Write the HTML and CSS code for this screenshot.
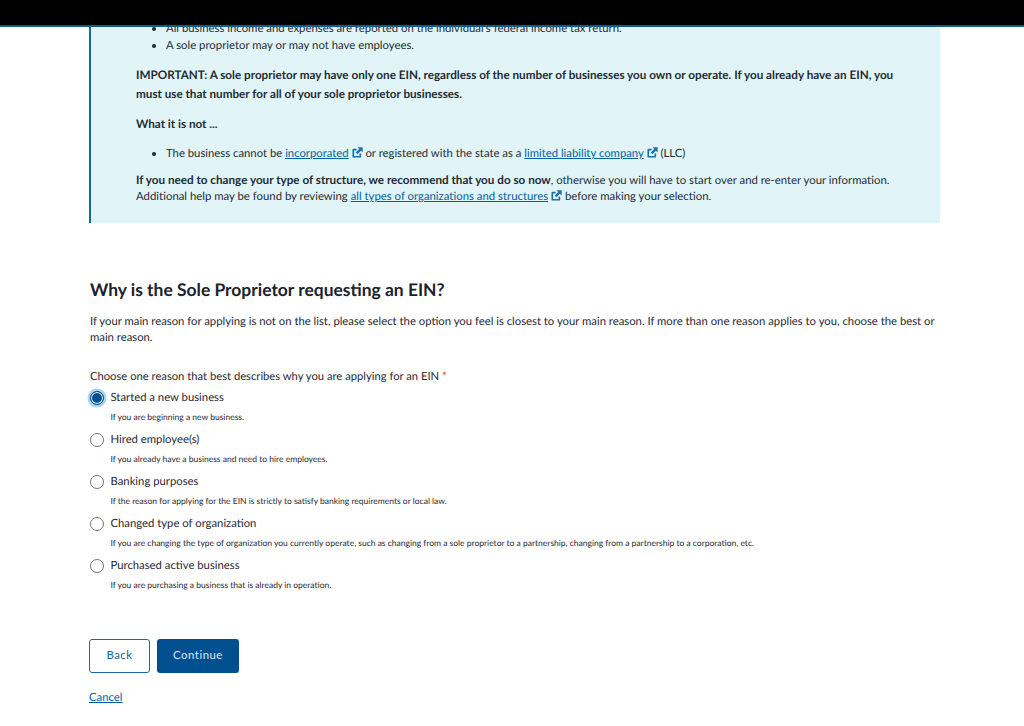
FILE: index.html
```html
<!DOCTYPE html>
<html lang="en">
<head>
<meta charset="utf-8">
<title>Why is the Sole Proprietor requesting an EIN?</title>
<link rel="stylesheet" href="styles.css">
</head>
<body>
<svg class="defs" width="0" height="0" aria-hidden="true"><symbol id="ext" viewBox="0 0 12 12"><path d="M5 2H1.500a1 1 0 0 0-1 1v7.500a1 1 0 0 0 1 1H9a1 1 0 0 0 1-1V7H8.200v2.700H2.300V3.800H5z" fill="currentColor"/><path d="M6 .4H11.600V6L9.700 4.100 5.900 7.900 4.100 6.100 7.900 2.300z" fill="currentColor"/></symbol></svg>
<div class="topbar"></div>
<main class="page">
  <section class="callout">
    <ul class="list first">
      <li>All business income and expenses are reported on the individual's federal income tax return.</li>
      <li>A sole proprietor may or may not have employees.</li>
    </ul>
    <p class="important"><strong>IMPORTANT: A sole proprietor may have only one EIN, regardless of the number of businesses you own or operate. If you already have an EIN, you must use that number for all of your sole proprietor businesses.</strong></p>
    <p class="whatnot"><strong>What it is not ...</strong></p>
    <ul class="list second">
      <li>The business cannot be <a href="#">incorporated</a> <svg class="ext"><use href="#ext"/></svg> or registered with the state as a <a href="#">limited liability company</a> <svg class="ext"><use href="#ext"/></svg> (LLC)</li>
    </ul>
    <p class="change"><strong>If you need to change your type of structure, we recommend that you do so now</strong>, otherwise you will have to start over and re-enter your information. Additional help may be found by reviewing <a href="#">all types of organizations and structures</a> <svg class="ext"><use href="#ext"/></svg> before making your selection.</p>
  </section>

  <h1 class="title">Why is the Sole Proprietor requesting an EIN?</h1>
  <p class="intro">If your main reason for applying is not on the list, please select the option you feel is closest to your main reason. If more than one reason applies to you, choose the best or main reason.</p>

  <form class="reasons">
    <div class="legend">Choose one reason that best describes why you are applying for an EIN <span class="req">*</span></div>
    <label class="option"><span class="radio checked"></span><span class="opt-label">Started a new business</span><span class="hint">If you are beginning a new business.</span></label>
    <label class="option"><span class="radio"></span><span class="opt-label">Hired employee(s)</span><span class="hint">If you already have a business and need to hire employees.</span></label>
    <label class="option"><span class="radio"></span><span class="opt-label">Banking purposes</span><span class="hint">If the reason for applying for the EIN is strictly to satisfy banking requirements or local law.</span></label>
    <label class="option"><span class="radio"></span><span class="opt-label">Changed type of organization</span><span class="hint">If you are changing the type of organization you currently operate, such as changing from a sole proprietor to a partnership, changing from a partnership to a corporation, etc.</span></label>
    <label class="option"><span class="radio"></span><span class="opt-label">Purchased active business</span><span class="hint">If you are purchasing a business that is already in operation.</span></label>
    <div class="actions">
      <button type="button" class="btn back">Back</button>
      <button type="button" class="btn primary">Continue</button>
    </div>
    <a class="cancel" href="#">Cancel</a>
  </form>
</main>
</body>
</html>
```
FILE: styles.css
```css
* { box-sizing: border-box; }
html, body { margin: 0; height: 726px; overflow: hidden; background: #fff; }
body { font-family: "Lato", "Noto Sans", sans-serif; font-size: 11.350px; color: #1f2a33; text-rendering: geometricPrecision; }
.defs { position: absolute; }
.topbar { position: absolute; top: 0; left: 0; right: 0; height: 27px; background: #000; border-bottom: 2px solid #0b5c96; }
.page { padding: 20px 84px 0 89px; }
a { color: #005ea2; }
strong { font-weight: 700; font-size: 11.690px; }
.callout { background: #e1f5f8; border-left: 2px solid #00749a; padding: 0 35px 0 45px; height: 203px; }
.list { margin: 0; padding: 0 0 0 30px; }
.list li { line-height: 17px; }
.list li::marker { font-family: "DejaVu Sans", sans-serif; }
.important { margin: 12px 0 0; line-height: 18px; }
.whatnot { margin: 11px 0 0; line-height: 18px; }
.second { margin-top: 11px; font-size: 11.320px; }
.change { margin: 10px 0 0; line-height: 16px; }
.ext { width: 11px; height: 11px; color: #1a6fb0; vertical-align: -1px; }
.title { margin: 56px 0 0 1px; font-size: 17.440px; line-height: 22px; font-weight: 700; color: #1b2229; }
.intro { margin: 13px 0 0 1px; line-height: 15.500px; font-size: 11.310px; width: 848px; }
.reasons { margin-top: 24px; padding-left: 1px; }
.legend { line-height: 16px; margin-bottom: 5px; font-size: 11.230px; }
.req { color: #d63e04; }
.option { display: grid; grid-template-columns: 20.500px 1fr; height: 42px; align-content: start; font-size: 11.300px; }
.radio { width: 14px; height: 14px; border-radius: 50%; border: 1px solid #71767a; background: #fff; margin-top: 1px; }
.radio.checked { background: #00508f; border: 1.500px solid #00508f; box-shadow: inset 0 0 0 1px #fff, 0 0 0 2.500px #a8d4f2; }
.opt-label { line-height: 16px; }
.hint { grid-column: 2; font-size: 8.500px; line-height: 12px; margin-top: 5px; }
.actions { display: flex; gap: 7px; margin-top: 39px; margin-left: -1px; }
.btn { height: 33.500px; padding: 0 0 3px; border-radius: 3px; font: inherit; font-size: 11.400px; letter-spacing: .5px; }
.back { width: 61px; background: #fff; color: #1a5f96; border: 1px solid #1a69a6; }
.primary { width: 82px; background: #00508f; color: #dfe9f2; border: 0; }
.cancel { display: inline-block; margin-top: 17.500px; margin-left: -1px; line-height: 16px; }
```
